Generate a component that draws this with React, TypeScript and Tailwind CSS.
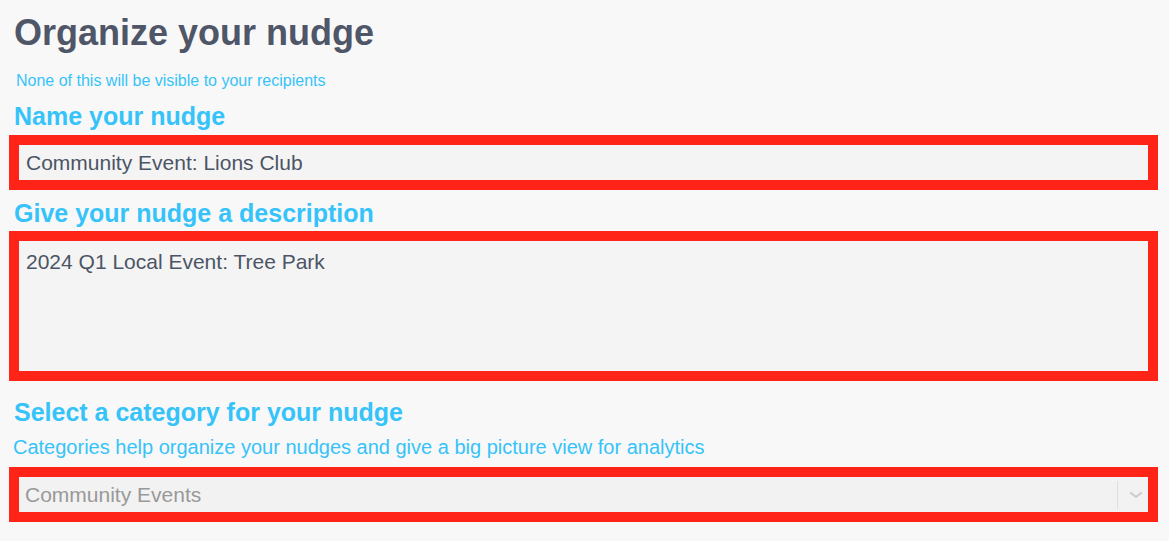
import React from "react";

export default function App() {
  return (
    <div className="min-h-[541px] w-full bg-[#f8f8f8] pl-[9px] pr-[11px] pt-[10px]" style={{ fontFamily: '"Liberation Sans", Arial, sans-serif' }}>
      <h1 className="pl-[5px] text-[36px] font-bold leading-[46px] text-[#4f5668]">Organize your nudge</h1>
      <p className="mt-[15px] pl-[7px] text-[16px] leading-[20px] text-[#36c3f9]">None of this will be visible to your recipients</p>
      <h2 className="mt-[10px] pl-[5px] text-[25px] font-bold leading-[30px] text-[#36c3f9]">Name your nudge</h2>
      <div className="mt-[4px] border-[10px] border-[#ff2318]">
        <input
          readOnly
          value="Community Event: Lions Club"
          className="block h-[35px] w-full bg-[#f4f4f4] px-[7px] text-[21px] text-[#4b5565] outline-none"
        />
      </div>
      <h2 className="mt-[8px] pl-[5px] text-[25px] font-bold leading-[30px] text-[#36c3f9]">Give your nudge a description</h2>
      <div className="mt-[3px] border-[10px] border-[#ff2318]">
        <textarea
          readOnly
          value="2024 Q1 Local Event: Tree Park"
          className="block h-[130px] w-full resize-none bg-[#f4f4f4] px-[7px] pt-[8px] text-[21px] leading-[25px] text-[#4b5565] outline-none"
        />
      </div>
      <h2 className="mt-[16px] pl-[5px] text-[25px] font-bold leading-[30px] text-[#36c3f9]">Select a category for your nudge</h2>
      <p className="mt-[8px] pl-[4px] text-[20px] leading-[24px] text-[#36c3f9]">Categories help organize your nudges and give a big picture view for analytics</p>
      <div className="mt-[8px] border-[10px] border-[#ff2318]">
        <div className="flex h-[35px] w-full items-center bg-[#f2f2f2]">
          <span className="flex-1 pl-[6px] text-[21px] text-[#999999]">Community Events</span>
          <div className="flex h-[28px] items-center border-l border-[#dedede] pl-[11px] pr-[5px]">
            <svg width="14" height="10" viewBox="0 0 14 10" fill="none">
              <path d="M2 3l5 4 5-4" stroke="#cccccc" strokeWidth="2.2" strokeLinecap="round" strokeLinejoin="round" />
            </svg>
          </div>
        </div>
      </div>
    </div>
  );
}
